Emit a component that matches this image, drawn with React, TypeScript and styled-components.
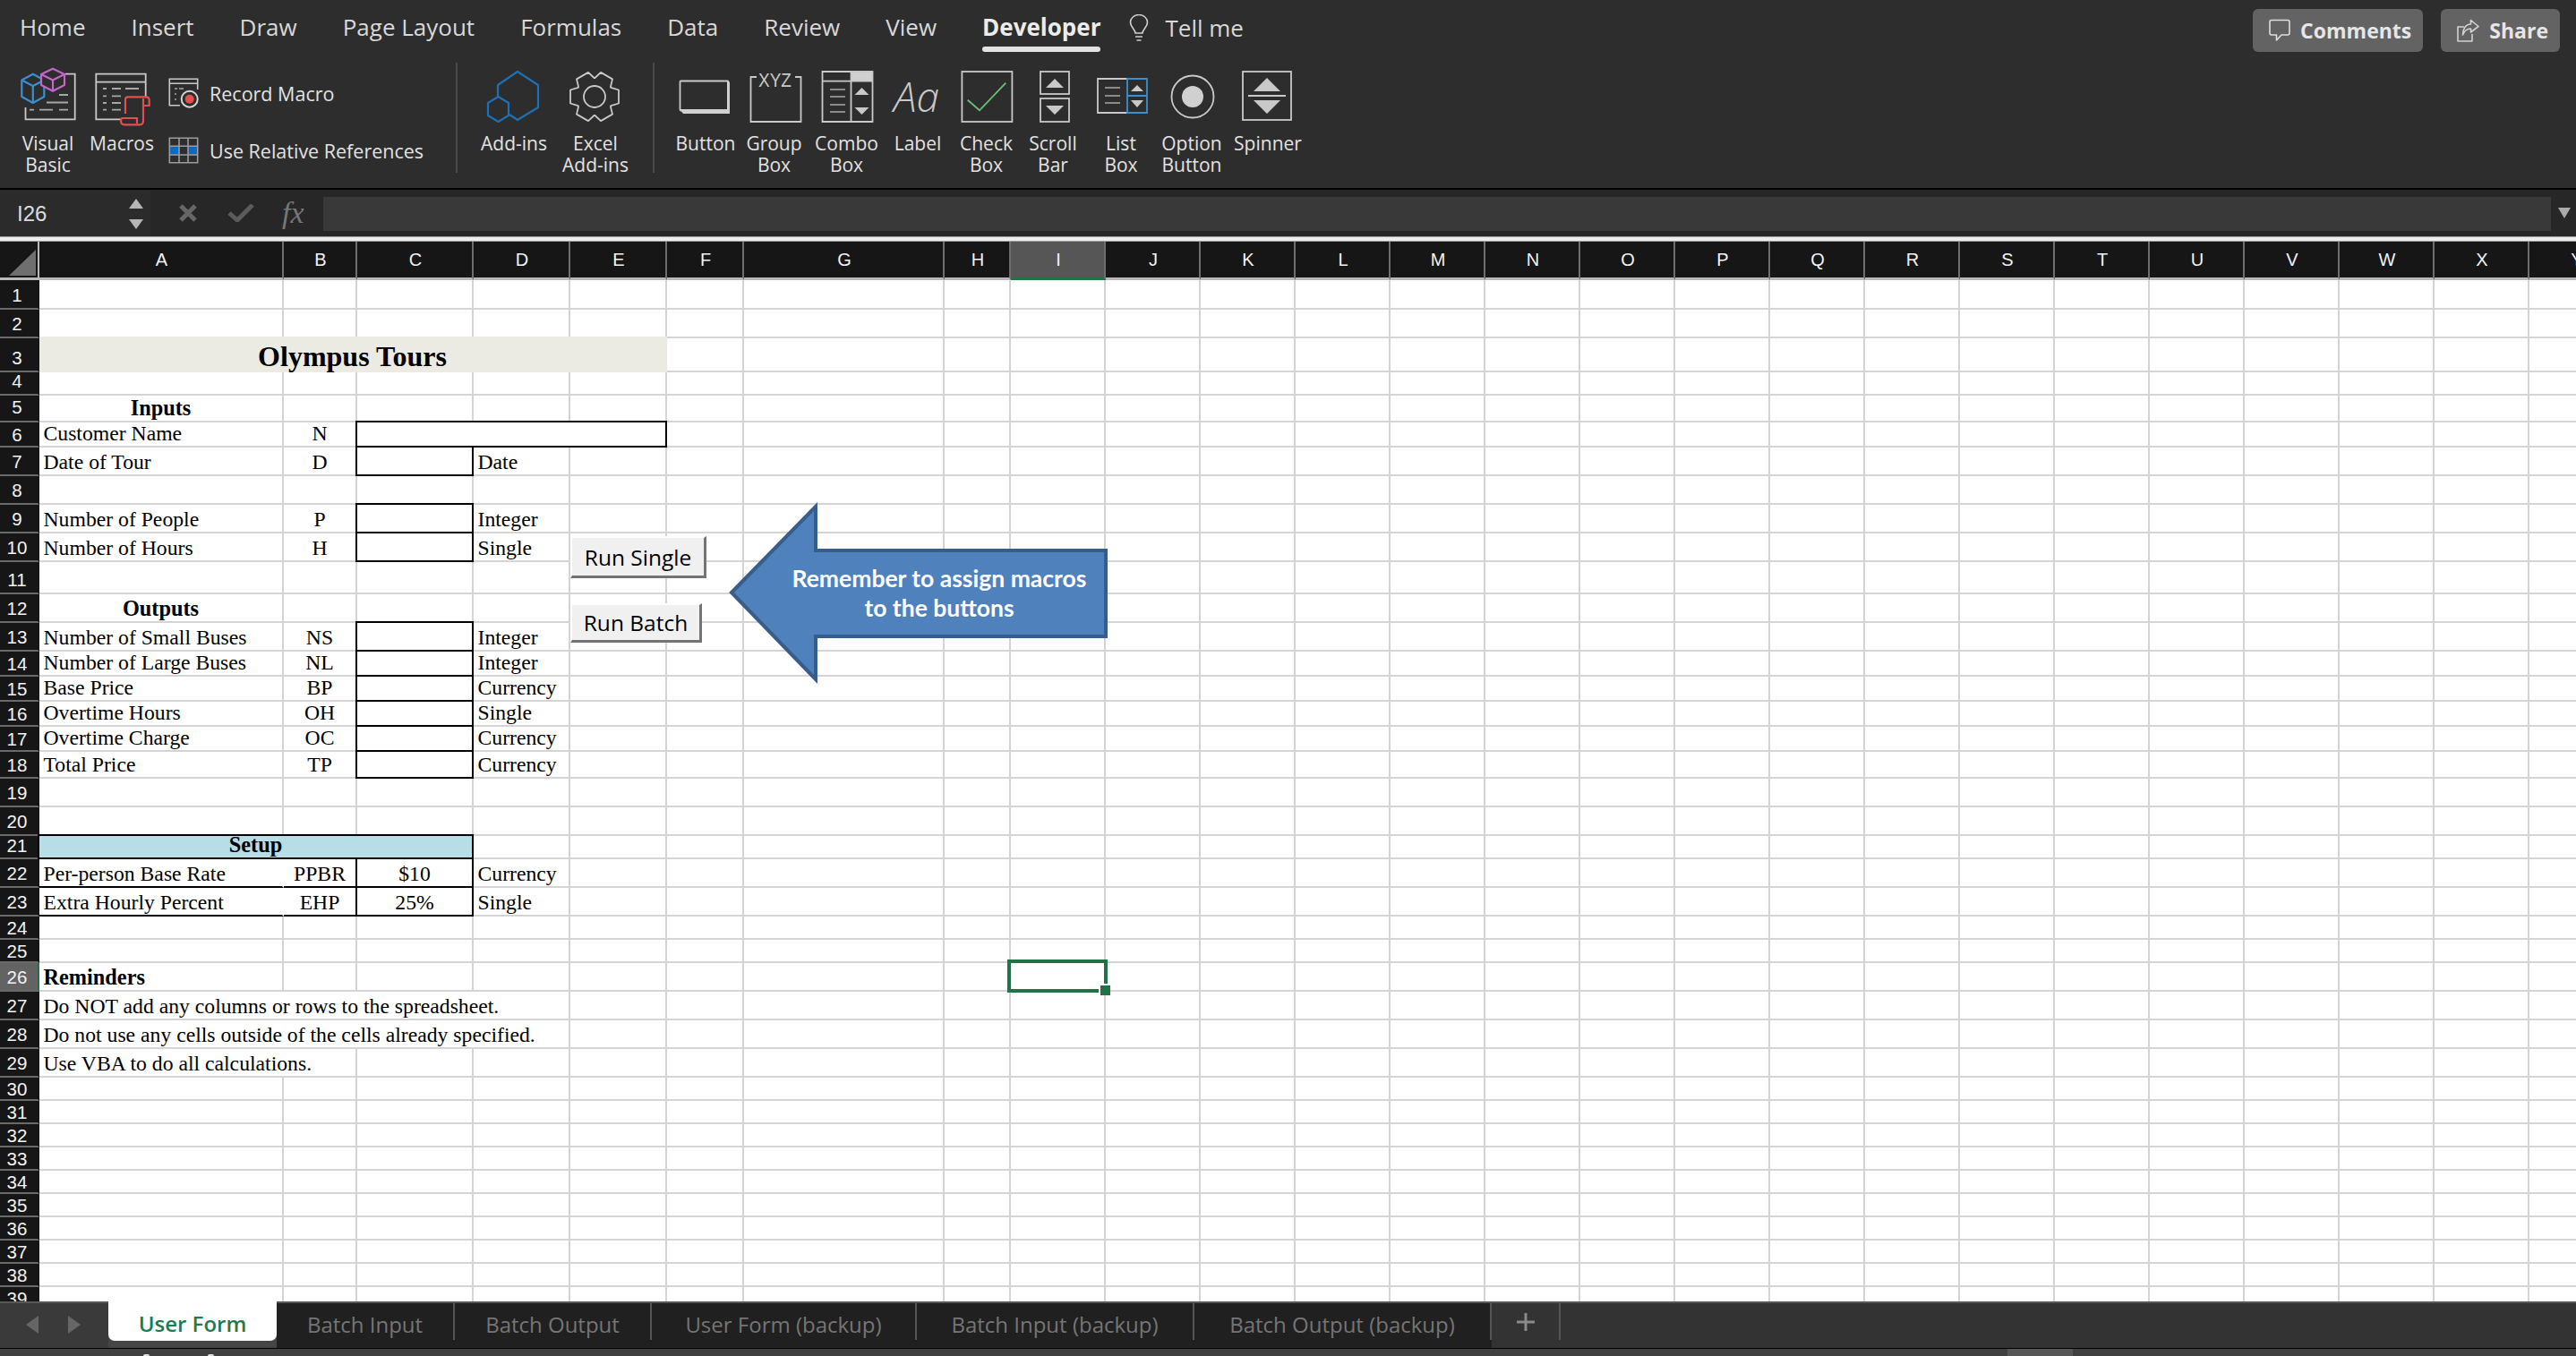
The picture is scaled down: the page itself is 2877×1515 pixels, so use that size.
import React from 'react';
import styled, { createGlobalStyle, css } from 'styled-components';

const GRID = '#d4d4d4';
const GREEN = '#217346';
const ICON = '#c9c9c9';

const menuTabs = ['Home', 'Insert', 'Draw', 'Page Layout', 'Formulas', 'Data', 'Review', 'View', 'Developer'];

const columns: [string, number][] = [
  ['A', 273], ['B', 82], ['C', 130], ['D', 108], ['E', 108], ['F', 86], ['G', 224], ['H', 74],
  ...'IJKLMNOPQRSTUVWXY'.split('').map((name): [string, number] => [name, 106]),
];

const rowHeights = [
  33, 32, 38, 26, 30, 28, 32, 32, 32, 32, 36, 32, 32, 28, 28, 28, 28, 30, 32, 32, 26, 32, 32, 26, 26, 32, 32, 32, 32,
  26, 26, 26, 26, 26, 26, 26, 26, 26, 26,
];

// row numbers that don't sit in the middle of their row in the reference
const rowHeadShift: Record<number, number> = { 3: 3, 4: -3, 5: -2, 11: 2, 21: -2 };

interface CellSpec {
  text?: string;
  span?: number;
  center?: boolean;
  bold?: boolean;
  big?: boolean;
  fill?: string;
  box?: boolean;
  inkBottom?: boolean;
  inkRight?: boolean;
  noRight?: boolean;
}

const label = (text: string): CellSpec => ({ text });
const code = (text: string): CellSpec => ({ text, center: true });

const cells: Record<string, CellSpec> = {
  A3: { text: 'Olympus Tours', span: 5, center: true, bold: true, big: true, fill: '#ecebe3' },
  A5: { text: 'Inputs', center: true, bold: true },
  A6: label('Customer Name'), B6: code('N'), C6: { span: 3, box: true },
  A7: label('Date of Tour'), B7: code('D'), C7: { box: true }, D7: label('Date'),
  A9: label('Number of People'), B9: code('P'), C9: { box: true }, D9: label('Integer'),
  A10: label('Number of Hours'), B10: code('H'), C10: { box: true }, D10: label('Single'),
  A12: { text: 'Outputs', center: true, bold: true },
  A13: label('Number of Small Buses'), B13: code('NS'), C13: { box: true }, D13: label('Integer'),
  A14: label('Number of Large Buses'), B14: code('NL'), C14: { box: true }, D14: label('Integer'),
  A15: label('Base Price'), B15: code('BP'), C15: { box: true }, D15: label('Currency'),
  A16: label('Overtime Hours'), B16: code('OH'), C16: { box: true }, D16: label('Single'),
  A17: label('Overtime Charge'), B17: code('OC'), C17: { box: true }, D17: label('Currency'),
  A18: label('Total Price'), B18: code('TP'), C18: { box: true }, D18: label('Currency'),
  A21: { text: 'Setup', span: 3, center: true, bold: true, fill: '#b7dde6', box: true },
  A22: { text: 'Per-person Base Rate', inkBottom: true, noRight: true },
  B22: { text: 'PPBR', center: true, inkBottom: true, inkRight: true },
  C22: { text: '$10', center: true, inkBottom: true, inkRight: true },
  D22: label('Currency'),
  A23: { text: 'Extra Hourly Percent', inkBottom: true, noRight: true },
  B23: { text: 'EHP', center: true, inkBottom: true, inkRight: true },
  C23: { text: '25%', center: true, inkBottom: true, inkRight: true },
  D23: label('Single'),
  A26: { text: 'Reminders', bold: true },
  A27: { text: 'Do NOT add any columns or rows to the spreadsheet.', span: 4 },
  A28: { text: 'Do not use any cells outside of the cells already specified.', span: 4 },
  A29: { text: 'Use VBA to do all calculations.', span: 2 },
};

const sheetTabs: [string, number][] = [
  ['Batch Input', 199],
  ['Batch Output', 220],
  ['User Form (backup)', 296],
  ['Batch Input (backup)', 310],
  ['Batch Output (backup)', 332],
];

const GlobalStyle = createGlobalStyle`
  html, body {
    margin: 0;
    background: #2d2d2d;
    overflow: hidden;
  }
  * {
    box-sizing: border-box;
  }
`;

const Window = styled.div`
  width: 2877px;
  height: 1515px;
  display: flex;
  flex-direction: column;
  overflow: hidden;
  background: #2d2d2d;
  font-family: 'Open Sans', 'Liberation Sans', sans-serif;
`;

const TopBar = styled.div`
  height: 72px;
  padding: 0 18px 0 22px;
  display: flex;
  align-items: flex-start;
  gap: 51px;
`;

const MenuTab = styled.div<{ $active?: boolean }>`
  position: relative;
  height: 58px;
  line-height: 61px;
  font-size: 26px;
  font-weight: ${(p) => (p.$active ? 700 : 500)};
  color: ${(p) => (p.$active ? '#ececec' : '#d8d8d8')};
  white-space: nowrap;

  ${(p) =>
    p.$active &&
    css`
      &::after {
        content: '';
        position: absolute;
        left: 0;
        right: 0;
        bottom: 0;
        height: 6px;
        border-radius: 3px;
        background: #e2e2e2;
      }
    `}
`;

const TellMe = styled.div`
  display: flex;
  align-items: center;
  gap: 18px;
  height: 62px;
  margin-left: -19px;
  font-size: 26px;
  font-weight: 500;
  color: #d8d8d8;
`;

const Actions = styled.div`
  margin-left: auto;
  padding-top: 10px;
  display: flex;
  gap: 20px;
`;

const ActionButton = styled.div`
  height: 48px;
  padding: 0 13px 0 18px;
  display: flex;
  align-items: center;
  gap: 11px;
  border-radius: 6px;
  background: #636363;
  color: #e6e6e6;
  font-size: 23px;
  font-weight: 700;
`;

const Ribbon = styled.div`
  height: 140px;
  padding-left: 12px;
  display: flex;
  align-items: flex-start;
  border-bottom: 2px solid #000;
`;

const Tool = styled.div<{ $width: number }>`
  width: ${(p) => p.$width}px;
  flex: none;
  display: flex;
  flex-direction: column;
  align-items: center;
`;

const ToolLabel = styled.div`
  margin-top: 4px;
  font-size: 21px;
  line-height: 24.4px;
  color: #e2e2e2;
  text-align: center;
  white-space: pre-line;
`;

const SmallTools = styled.div`
  width: 322px;
  margin-left: 10px;
  padding-top: 14px;
  display: flex;
  flex-direction: column;
  gap: 30px;
`;

const SmallTool = styled.div`
  display: flex;
  align-items: center;
  gap: 11px;
  font-size: 21.5px;
  color: #e2e2e2;
  white-space: nowrap;
`;

const RibbonDivider = styled.div<{ $before?: number; $after: number }>`
  width: 2px;
  height: 123px;
  margin-top: -2px;
  margin-left: ${(p) => p.$before ?? 0}px;
  margin-right: ${(p) => p.$after}px;
  flex: none;
  background: #494949;
`;

const FormulaBar = styled.div`
  height: 52px;
  display: flex;
  align-items: stretch;
  background: #272727;
`;

const NameBox = styled.div`
  width: 168px;
  margin-top: 1px;
  padding: 0 8px 0 19px;
  display: flex;
  align-items: center;
  justify-content: space-between;
  background: #2b2b2b;
  color: #dcdcdc;
  font-family: 'Liberation Sans', sans-serif;
  font-size: 24px;
`;

const NameStepper = styled.div`
  display: flex;
  flex-direction: column;
  gap: 12px;
`;

const FormulaControls = styled.div`
  width: 193px;
  padding-left: 32px;
  display: flex;
  align-items: center;
  gap: 34px;
`;

const FxLabel = styled.span`
  margin-left: -3px;
  color: #777;
  font-family: 'Liberation Serif', serif;
  font-style: italic;
  font-size: 34px;
`;

const FormulaInput = styled.div`
  width: 2488px;
  margin: 8px 0 6px;
  background: #393939;
`;

const FormulaCaret = styled.div`
  margin-left: 8px;
  align-self: center;
`;

const SheetEdge = styled.div`
  height: 6px;
  background: #ededed;
  border-top: 1px solid #9d9d9d;
  border-bottom: 1px solid #9d9d9d;
`;

const Sheet = styled.div`
  position: relative;
  height: 1184px;
  overflow: hidden;
  background: #fff;
`;

const Grid = styled.div<{ $cols: string; $rows: string }>`
  display: grid;
  grid-template-columns: ${(p) => p.$cols};
  grid-template-rows: ${(p) => p.$rows};
  width: max-content;
`;

const Corner = styled.div`
  background: #161616;
  border-right: 2px solid #b9b9b9;
  border-bottom: 3px solid #b9b9b9;
  padding: 9px 0 0 10px;
`;

const ColumnHead = styled.div<{ $selected?: boolean }>`
  display: flex;
  align-items: center;
  justify-content: center;
  padding-left: 2px;
  background: ${(p) => (p.$selected ? '#565656' : '#161616')};
  border-right: 2px solid #6e6e6e;
  border-bottom: 3px solid ${(p) => (p.$selected ? GREEN : '#b9b9b9')};
  color: #f2f2f2;
  font-family: 'Liberation Sans', sans-serif;
  font-size: 20px;
`;

const RowHead = styled.div<{ $selected?: boolean; $shift: number }>`
  display: flex;
  align-items: center;
  justify-content: center;
  overflow: hidden;
  padding: ${(p) => 2 + Math.max(p.$shift, 0) * 2}px 4px ${(p) => Math.max(-p.$shift, 0) * 2}px 0;
  background: ${(p) => (p.$selected ? '#636363' : '#161616')};
  border-right: 2px solid ${(p) => (p.$selected ? GREEN : '#161616')};
  border-bottom: 2px solid #6a6a6a;
  color: #f2f2f2;
  font-family: 'Liberation Sans', sans-serif;
  font-size: 20.5px;
  line-height: 16px;
`;

// Excel keeps text on the bottom of the row, whatever the row height
const Cell = styled.div<{
  $span: number;
  $center?: boolean;
  $bold?: boolean;
  $big?: boolean;
  $fill?: string;
  $box?: boolean;
  $inkBottom?: boolean;
  $inkRight?: boolean;
  $noRight?: boolean;
}>`
  grid-column: span ${(p) => p.$span};
  min-width: 0;
  padding: 0 0 ${(p) => (p.$bold && !p.$big ? 1 : 0.5)}px ${(p) => (p.$center ? 0 : 4.5)}px;
  display: flex;
  align-items: flex-end;
  justify-content: ${(p) => (p.$center ? 'center' : 'flex-start')};
  white-space: nowrap;
  background: ${(p) => p.$fill ?? 'transparent'};
  border-right: 2px solid ${(p) => (p.$noRight ? 'transparent' : p.$inkRight ? '#000' : p.$fill ?? GRID)};
  border-bottom: 2px solid ${(p) => (p.$inkBottom ? '#000' : p.$fill ?? GRID)};
  color: #000;
  font-family: 'Liberation Serif', serif;
  font-size: ${(p) => (p.$big ? 32 : p.$bold ? 24.3 : 23.7)}px;
  font-weight: ${(p) => (p.$bold ? 700 : 400)};
  line-height: ${(p) => (p.$big ? 32 : 27)}px;

  ${(p) =>
    p.$fill &&
    !p.$box &&
    css`
      box-shadow: 0 -2px 0 ${p.$fill};
    `}

  ${(p) =>
    p.$box &&
    css`
      border-right-color: #000;
      border-bottom-color: #000;
      box-shadow: -2px 0 0 #000, 0 -2px 0 #000, -2px -2px 0 #000;
    `}
`;

const SelectedCell = styled.div`
  position: relative;
  border-right: 2px solid ${GRID};
  border-bottom: 2px solid ${GRID};
`;

const SelectionBox = styled.div`
  position: absolute;
  left: -4px;
  top: -4px;
  width: 112px;
  height: 37px;
  border: 4px solid ${GREEN};
`;

const SelectionHandle = styled.div`
  position: absolute;
  right: -7px;
  bottom: -7px;
  width: 13px;
  height: 13px;
  background: ${GREEN};
  border: 2px solid #fff;
  border-right: 0;
  border-bottom: 0;
`;

const MacroButton = styled.div<{ $left: number; $top: number; $width: number; $height: number }>`
  position: absolute;
  left: ${(p) => p.$left}px;
  top: ${(p) => p.$top}px;
  width: ${(p) => p.$width}px;
  height: ${(p) => p.$height}px;
  display: flex;
  align-items: center;
  justify-content: center;
  background: #f0f0f0;
  border-top: 2px solid #fff;
  border-left: 2px solid #fff;
  border-right: 3px solid #747474;
  border-bottom: 3px solid #747474;
  color: #000;
  font-family: 'Open Sans', sans-serif;
  font-size: 24.5px;
`;

const Callout = styled.div`
  position: absolute;
  left: 810px;
  top: 289px;
  width: 430px;
  height: 208px;
  padding-left: 48px;
  display: flex;
  align-items: center;
  justify-content: center;
`;

const CalloutShape = styled.svg`
  position: absolute;
  left: 0;
  top: 0;
`;

const CalloutText = styled.div`
  position: relative;
  color: #fff;
  font-family: Lato, 'Open Sans', sans-serif;
  font-size: 26.5px;
  font-weight: 700;
  line-height: 33px;
  text-align: center;
`;

const TabBar = styled.div`
  height: 52px;
  display: flex;
  align-items: stretch;
  background: #333;
  border-top: 2px solid #585858;
`;

const TabNav = styled.div`
  width: 121px;
  padding: 14px 0 0 29px;
  background: #3a3a3a;
`;

const TabArrows = styled.div`
  display: flex;
  gap: 33px;
`;

const ActiveTabSlot = styled.div`
  width: 188px;
  background: #454545;
`;

const ActiveTab = styled.div`
  height: 44px;
  margin-top: -2px;
  padding-top: 6px;
  border-radius: 0 0 7px 7px;
  background: #fff;
  color: #1f7a50;
  font-size: 24px;
  font-weight: 600;
  line-height: 38px;
  text-align: center;
`;

const TabStrip = styled.div`
  display: flex;
  align-items: flex-start;
  background: #202020;
`;

const SheetTab = styled.div<{ $width: number }>`
  width: ${(p) => p.$width}px;
  height: 41px;
  padding-top: 7px;
  border-right: 2px solid #555;
  color: #757575;
  font-size: 24px;
  line-height: 33px;
  text-align: center;
  white-space: nowrap;
`;

const AddTab = styled.div`
  width: 77px;
  height: 41px;
  display: flex;
  align-items: center;
  justify-content: center;
  border-right: 2px solid #555;
`;

const StatusBar = styled.div`
  height: 9px;
  padding-left: 160px;
  display: flex;
  background: #404040;
  border-top: 1px solid #000;
`;

const StatusMark = styled.div<{ $gap?: number }>`
  width: 7px;
  height: 2px;
  margin-top: 6px;
  margin-left: ${(p) => p.$gap ?? 0}px;
  border-radius: 3px 3px 0 0;
  background: #e8e8e8;
`;

const StatusThumb = styled.div`
  width: 73px;
  margin-left: 2003px;
  background: #565656;
`;

// ribbon icons share one 64x72 canvas, centred over the label
function ToolIcon({ children }: { children: React.ReactNode }) {
  return (
    <svg width="64" height="72" viewBox="0 0 64 72" fill="none" stroke={ICON} strokeWidth="1.8">
      {children}
    </svg>
  );
}

function VisualBasicIcon() {
  return (
    <ToolIcon>
      <path d="M6.5 48V61.3H61.7V10.7H50.7" />
      <path d="M44 34H54M30 42.5H54M11 50.7H16M22 50.7H37M44 50.7H54" stroke="#a8a8a8" />
      <g stroke="#3b8fd0" strokeWidth="2.2" strokeLinejoin="round">
        <path d="M14.8 10.7L27.3 17.5V36L14.8 43L2.3 36V17.5Z" fill="#2d2d2d" />
        <path d="M2.3 17.5L14.8 24L27.3 17.5M14.8 24V43" />
      </g>
      <g stroke="#c266c8" strokeWidth="2.2" strokeLinejoin="round">
        <path d="M37 4.7L50 11V23L37 29.7L24 23V11Z" fill="#2d2d2d" />
        <path d="M24 11L37 17.5L50 11M37 17.5V29.7" />
      </g>
    </ToolIcon>
  );
}

function MacrosIcon() {
  return (
    <ToolIcon>
      <path d="M31 61.3H3.3V10.7H58.7V36M3.3 19.7H58.7" />
      <path d="M11 27H15M21 27H31M36 27H51M11 35.3H15M21 35.3H31M11 43H15M21 43H31M11 50.7H15M21 50.7H31" stroke="#a8a8a8" />
      <g stroke="#e05050" strokeWidth="2.2">
        <path d="M36 55V39Q36 36.3 39 36.3H59Q62.7 36.3 62.7 40V46H56" />
        <path d="M56 38V63Q56 67.3 52 67.3H35Q31 67.3 31 63Q31 60 33 60H49V66" />
      </g>
    </ToolIcon>
  );
}

function AddInsIcon() {
  return (
    <ToolIcon>
      <g stroke="#1f6fb5" strokeWidth="2.2" strokeLinejoin="round">
        <path d="M14 36V23L36 8L59 23V48L36 62L27 56" />
        <path d="M14.5 36L26 43V57L14.5 64L3 57V43Z" />
      </g>
    </ToolIcon>
  );
}

function gearPath(cx: number, cy: number, outer: number, inner: number) {
  const points: string[] = [];
  for (let tooth = 0; tooth < 6; tooth++) {
    const mid = (tooth * Math.PI) / 3;
    [
      [-0.5, inner],
      [-0.27, outer],
      [0.27, outer],
      [0.5, inner],
    ].forEach(([offset, radius]) => {
      const angle = mid + offset;
      points.push(`${(cx + radius * Math.cos(angle)).toFixed(1)} ${(cy + radius * Math.sin(angle)).toFixed(1)}`);
    });
  }
  return `M${points.join('L')}Z`;
}

function ExcelAddInsIcon() {
  return (
    <ToolIcon>
      <path d={gearPath(31, 36, 28, 21)} strokeLinejoin="round" />
      <circle cx="31" cy="36" r="12" />
    </ToolIcon>
  );
}

function ButtonIcon() {
  return (
    <ToolIcon>
      <rect x="3.5" y="18.5" width="54" height="33" rx="1" />
      <path d="M3 50L7 55H59V20L56 18V50Z" fill="#d0d0d0" stroke="none" />
    </ToolIcon>
  );
}

function GroupBoxIcon() {
  return (
    <ToolIcon>
      <path d="M12 14H5.5V64H61.5V14H55" />
      <text x="14" y="24.6" fontFamily="'Liberation Sans', sans-serif" fontSize="22" fill={ICON} stroke="none" textLength="37" lengthAdjust="spacingAndGlyphs">
        XYZ
      </text>
    </ToolIcon>
  );
}

function ComboBoxIcon() {
  return (
    <ToolIcon>
      <rect x="36.5" y="8" width="24" height="10.7" fill="#d0d0d0" stroke="none" />
      <path d="M4.5 8H60.5V64H4.5ZM4.5 18.7H60.5M36.5 8V64" />
      <path d="M13 28H30M13 36H30M13 45H30M13 53H30" stroke="#8a8a8a" />
      <path d="M40.5 34L48.5 26L56.5 34ZM40.5 48L48.5 56L56.5 48Z" fill={ICON} stroke="none" />
    </ToolIcon>
  );
}

function LabelIcon() {
  return (
    <ToolIcon>
      <text x="5" y="53" fontFamily="'Open Sans', sans-serif" fontStyle="italic" fontWeight="300" fontSize="46" fill={ICON} stroke="none">
        Aa
      </text>
    </ToolIcon>
  );
}

function CheckBoxIcon() {
  return (
    <ToolIcon>
      <rect x="4.4" y="8" width="56" height="56" />
      <path d="M10.7 39.7L24 51.3L53.3 20.7" stroke="#6bbf7a" />
    </ToolIcon>
  );
}

function ScrollBarIcon() {
  return (
    <ToolIcon>
      <rect x="18" y="8" width="32" height="25" />
      <rect x="18" y="38" width="32" height="26" />
      <path d="M24 26L34 16L44 26ZM24 46L34 56L44 46Z" fill={ICON} stroke="none" />
    </ToolIcon>
  );
}

function ListBoxIcon() {
  return (
    <ToolIcon>
      <path d="M39 16H6V54H39" />
      <path d="M14 26H31M14 35H31M14 43H31" stroke="#8a8a8a" />
      <path d="M39 16H61V54H39ZM39 35H61" stroke="#3a8fd0" />
      <path d="M43 30L50 23L57 30ZM43 40L50 48L57 40Z" fill={ICON} stroke="none" />
    </ToolIcon>
  );
}

function OptionButtonIcon() {
  return (
    <ToolIcon>
      <circle cx="33" cy="36" r="23.5" />
      <circle cx="33" cy="36" r="12" fill="#d0d0d0" stroke="none" />
    </ToolIcon>
  );
}

function SpinnerIcon() {
  return (
    <ToolIcon>
      <rect x="4" y="8" width="54" height="54" />
      <path d="M10 35H52" strokeWidth="2.2" />
      <path d="M16 30L31 15L46 30ZM16 40L31 55L46 40Z" fill={ICON} stroke="none" />
    </ToolIcon>
  );
}

function RecordMacroIcon() {
  return (
    <svg width="36" height="36" viewBox="0 0 36 36" fill="none" stroke={ICON} strokeWidth="1.6">
      <path d="M14 31.7H2.3V2.3H33.7V14M2.3 7.3H33.7" />
      <path d="M8 13H11M13 13H18M8 19H10M8 25H10" stroke="#a8a8a8" />
      <circle cx="24.7" cy="24.7" r="9" stroke="#d5d5d5" strokeWidth="2" />
      <circle cx="24.7" cy="24.7" r="5" fill="#e84c4c" stroke="none" />
    </svg>
  );
}

function RelativeRefsIcon() {
  return (
    <svg width="36" height="32" viewBox="0 0 36 32" fill="none" stroke="#9c9c9c" strokeWidth="1.6">
      <rect x="2.5" y="11" width="10.5" height="10.5" fill="#0a6ac0" stroke="none" />
      <rect x="23" y="11" width="10.5" height="10.5" fill="#0a6ac0" stroke="none" />
      <path d="M2.3 2.3H33.7V29.7H2.3ZM2.3 11.3H33.7M2.3 21H33.7M13 2.3V29.7M23 2.3V29.7" />
    </svg>
  );
}

function BulbIcon() {
  return (
    <svg width="22" height="30" viewBox="0 0 22 30" fill="none" stroke="#cfcfcf" strokeWidth="1.6">
      <path d="M7 21C7 17 1.5 14 1.5 9A9.5 8.5 0 0 1 20.5 9C20.5 14 15 17 15 21Z" />
      <path d="M7 25H15M8.5 29H13.5" />
    </svg>
  );
}

function CommentIcon() {
  return (
    <svg width="24" height="26" viewBox="0 0 24 26" fill="none" stroke="#dedede" strokeWidth="1.6" strokeLinejoin="round">
      <path d="M3 1.5H21Q23 1.5 23 3.5V16Q23 18 21 18H14L8.5 24V18H3Q1 18 1 16V3.5Q1 1.5 3 1.5Z" />
    </svg>
  );
}

function ShareIcon() {
  return (
    <svg width="25" height="26" viewBox="0 0 25 26" fill="none" stroke="#d2d2d2" strokeWidth="1.6" strokeLinejoin="round">
      <path d="M8 9H1V25H17V17" />
      <path d="M15.5 1.5L24 8.5L15.5 15V11C11 11 8 14 6.5 18C6.5 11 10 6 15.5 6Z" />
    </svg>
  );
}

function CrossIcon() {
  return (
    <svg width="20" height="20" viewBox="0 0 20 20" stroke="#666" strokeWidth="5">
      <path d="M2 2L18 18M18 2L2 18" />
    </svg>
  );
}

function TickIcon() {
  return (
    <svg width="30" height="20" viewBox="0 0 30 20" fill="none" stroke="#5b5b5b" strokeWidth="5">
      <path d="M2 10L11 18L28 1" />
    </svg>
  );
}

const TriangleShape = styled.svg`
  display: block;
`;

function Triangle({ direction, width, height, color }: { direction: 'up' | 'down' | 'left' | 'right'; width: number; height: number; color: string }) {
  const points = {
    up: `0,${height} ${width / 2},0 ${width},${height}`,
    down: `0,0 ${width / 2},${height} ${width},0`,
    left: `${width},0 0,${height / 2} ${width},${height}`,
    right: `0,0 ${width},${height / 2} 0,${height}`,
  }[direction];
  return (
    <TriangleShape width={width} height={height} viewBox={`0 0 ${width} ${height}`}>
      <polygon points={points} fill={color} />
    </TriangleShape>
  );
}

const tools: { width: number; label: string; icon: React.ReactNode }[] = [
  { width: 76, label: 'Button', icon: <ButtonIcon /> },
  { width: 77, label: 'Group\nBox', icon: <GroupBoxIcon /> },
  { width: 85, label: 'Combo\nBox', icon: <ComboBoxIcon /> },
  { width: 74, label: 'Label', icon: <LabelIcon /> },
  { width: 79, label: 'Check\nBox', icon: <CheckBoxIcon /> },
  { width: 70, label: 'Scroll\nBar', icon: <ScrollBarIcon /> },
  { width: 82, label: 'List\nBox', icon: <ListBoxIcon /> },
  { width: 76, label: 'Option\nButton', icon: <OptionButtonIcon /> },
  { width: 94, label: 'Spinner', icon: <SpinnerIcon /> },
];

function renderRow(rowIndex: number) {
  const row = rowIndex + 1;
  const out: React.ReactNode[] = [
    <RowHead key={`head-${row}`} $selected={row === 26} $shift={rowHeadShift[row] ?? 0}>
      {row}
    </RowHead>,
  ];
  let col = 0;
  while (col < columns.length) {
    const name = columns[col][0];
    const spec = cells[`${name}${row}`] ?? {};
    const span = spec.span ?? 1;
    if (name === 'I' && row === 26) {
      out.push(
        <SelectedCell key={`${name}${row}`}>
          <SelectionBox>
            <SelectionHandle />
          </SelectionBox>
        </SelectedCell>,
      );
    } else {
      out.push(
        <Cell
          key={`${name}${row}`}
          $span={span}
          $center={spec.center}
          $bold={spec.bold}
          $big={spec.big}
          $fill={spec.fill}
          $box={spec.box}
          $inkBottom={spec.inkBottom}
          $inkRight={spec.inkRight}
          $noRight={spec.noRight}
        >
          {spec.text}
        </Cell>,
      );
    }
    col += span;
  }
  return out;
}

export default function App() {
  const gridCols = ['44px', ...columns.map(([, width]) => `${width}px`)].join(' ');
  const gridRows = ['43px', ...rowHeights.map((height) => `${height}px`)].join(' ');

  return (
    <Window>
      <GlobalStyle />
      <TopBar>
        {menuTabs.map((tab) => (
          <MenuTab key={tab} $active={tab === 'Developer'}>
            {tab}
          </MenuTab>
        ))}
        <TellMe>
          <BulbIcon />
          Tell me
        </TellMe>
        <Actions>
          <ActionButton>
            <CommentIcon />
            Comments
          </ActionButton>
          <ActionButton>
            <ShareIcon />
            Share
          </ActionButton>
        </Actions>
      </TopBar>

      <Ribbon>
        <Tool $width={83}>
          <VisualBasicIcon />
          <ToolLabel>{'Visual\nBasic'}</ToolLabel>
        </Tool>
        <Tool $width={82}>
          <MacrosIcon />
          <ToolLabel>Macros</ToolLabel>
        </Tool>
        <SmallTools>
          <SmallTool>
            <RecordMacroIcon />
            Record Macro
          </SmallTool>
          <SmallTool>
            <RelativeRefsIcon />
            Use Relative References
          </SmallTool>
        </SmallTools>
        <RibbonDivider $after={17} />
        <Tool $width={92}>
          <AddInsIcon />
          <ToolLabel>Add-ins</ToolLabel>
        </Tool>
        <Tool $width={90}>
          <ExcelAddInsIcon />
          <ToolLabel>{'Excel\nAdd-ins'}</ToolLabel>
        </Tool>
        <RibbonDivider $before={19} $after={19} />
        {tools.map((tool) => (
          <Tool key={tool.label} $width={tool.width}>
            {tool.icon}
            <ToolLabel>{tool.label}</ToolLabel>
          </Tool>
        ))}
      </Ribbon>

      <FormulaBar>
        <NameBox>
          I26
          <NameStepper>
            <Triangle direction="up" width={16} height={11} color="#b5b5b5" />
            <Triangle direction="down" width={16} height={11} color="#b5b5b5" />
          </NameStepper>
        </NameBox>
        <FormulaControls>
          <CrossIcon />
          <TickIcon />
          <FxLabel>fx</FxLabel>
        </FormulaControls>
        <FormulaInput />
        <FormulaCaret>
          <Triangle direction="down" width={14} height={12} color="#aaa" />
        </FormulaCaret>
      </FormulaBar>
      <SheetEdge />

      <Sheet>
        <Grid $cols={gridCols} $rows={gridRows}>
          <Corner>
            <svg width="30" height="30" viewBox="0 0 30 30">
              <polygon points="30,0 30,29 0,29" fill="#6f6f6f" />
            </svg>
          </Corner>
          {columns.map(([name]) => (
            <ColumnHead key={name} $selected={name === 'I'}>
              {name}
            </ColumnHead>
          ))}
          {rowHeights.map((_, index) => renderRow(index))}
        </Grid>

        <MacroButton $left={637} $top={329} $width={152} $height={47}>
          Run Single
        </MacroButton>
        <MacroButton $left={637} $top={404} $width={147} $height={44}>
          Run Batch
        </MacroButton>
        <Callout>
          <CalloutShape width="430" height="208" viewBox="0 0 430 208">
            <polygon
              points="7,103 101,7 101,56 425,56 425,152 101,152 101,200"
              fill="#4f81bd"
              stroke="#385d8a"
              strokeWidth="4"
            />
          </CalloutShape>
          <CalloutText>
            Remember to assign macros
            <br />
            to the buttons
          </CalloutText>
        </Callout>
      </Sheet>

      <TabBar>
        <TabNav>
          <TabArrows>
            <Triangle direction="left" width={14} height={20} color="#666" />
            <Triangle direction="right" width={14} height={20} color="#666" />
          </TabArrows>
        </TabNav>
        <ActiveTabSlot>
          <ActiveTab>User Form</ActiveTab>
        </ActiveTabSlot>
        <TabStrip>
          {sheetTabs.map(([tab, width]) => (
            <SheetTab key={tab} $width={width}>
              {tab}
            </SheetTab>
          ))}
        </TabStrip>
        <AddTab>
          <svg width="20" height="20" viewBox="0 0 20 20" stroke="#8a8a8a" strokeWidth="3">
            <path d="M10 0V20M0 10H20" />
          </svg>
        </AddTab>
      </TabBar>
      <StatusBar>
        <StatusMark />
        <StatusMark $gap={65} />
        <StatusThumb />
      </StatusBar>
    </Window>
  );
}
